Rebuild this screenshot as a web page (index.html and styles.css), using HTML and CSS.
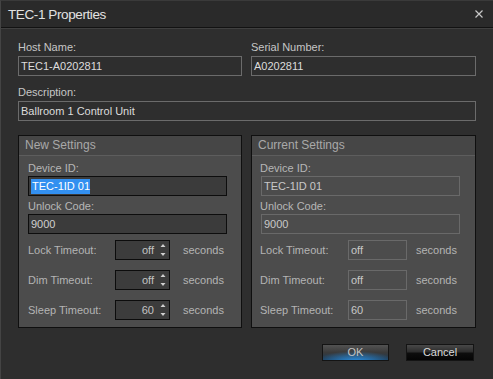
FILE: index.html
```html
<!DOCTYPE html>
<html lang="en">
<head>
<meta charset="UTF-8">
<title>TEC-1 Properties</title>
<link rel="stylesheet" href="styles.css">
</head>
<body>
<div class="dialog">
  <div class="titlebar">
    <span class="title">TEC-1 Properties</span>
    <svg class="close" width="8" height="8" viewBox="0 0 8 8"><path d="M0.5 0.5 L7.5 7.5 M7.5 0.5 L0.5 7.5" stroke="#c8c8c8" stroke-width="1.2"/></svg>
  </div>

  <div class="content">
    <div class="two-col">
      <div>
        <div class="lbl">Host Name:</div>
        <div class="field">TEC1-A0202811</div>
      </div>
      <div>
        <div class="lbl">Serial Number:</div>
        <div class="field">A0202811</div>
      </div>
    </div>

    <div class="desc">
      <div class="lbl">Description:</div>
      <div class="field">Ballroom 1 Control Unit</div>
    </div>

    <div class="two-col groups">
      <div class="group">
        <div class="group-head">New Settings</div>
        <div class="group-body">
          <div class="glbl">Device ID:</div>
          <div class="edit"><span class="sel">TEC-1ID 01</span></div>
          <div class="glbl gap">Unlock Code:</div>
          <div class="edit">9000</div>

          <div class="trow first">
            <span class="tlbl">Lock Timeout:</span>
            <div class="spin"><span>off</span><svg width="6" height="18" viewBox="0 0 6 18"><path d="M3 3 L5.5 6 L0.5 6 Z M0.5 12 L5.5 12 L3 15 Z" fill="#d0d0d0"/></svg></div>
            <span class="unit">seconds</span>
          </div>
          <div class="trow">
            <span class="tlbl">Dim Timeout:</span>
            <div class="spin"><span>off</span><svg width="6" height="18" viewBox="0 0 6 18"><path d="M3 3 L5.5 6 L0.5 6 Z M0.5 12 L5.5 12 L3 15 Z" fill="#d0d0d0"/></svg></div>
            <span class="unit">seconds</span>
          </div>
          <div class="trow">
            <span class="tlbl">Sleep Timeout:</span>
            <div class="spin"><span>60</span><svg width="6" height="18" viewBox="0 0 6 18"><path d="M3 3 L5.5 6 L0.5 6 Z M0.5 12 L5.5 12 L3 15 Z" fill="#d0d0d0"/></svg></div>
            <span class="unit">seconds</span>
          </div>
        </div>
      </div>

      <div class="group current">
        <div class="group-head">Current Settings</div>
        <div class="group-body">
          <div class="glbl">Device ID:</div>
          <div class="ro">TEC-1ID 01</div>
          <div class="glbl gap">Unlock Code:</div>
          <div class="ro">9000</div>

          <div class="trow first">
            <span class="tlbl">Lock Timeout:</span>
            <div class="ro small">off</div>
            <span class="unit">seconds</span>
          </div>
          <div class="trow">
            <span class="tlbl">Dim Timeout:</span>
            <div class="ro small">off</div>
            <span class="unit">seconds</span>
          </div>
          <div class="trow">
            <span class="tlbl">Sleep Timeout:</span>
            <div class="ro small">60</div>
            <span class="unit">seconds</span>
          </div>
        </div>
      </div>
    </div>

    <div class="buttons">
      <div class="btn ok">OK</div>
      <div class="btn cancel">Cancel</div>
    </div>
  </div>
</div>
</body>
</html>
```

FILE: styles.css
```css
* {
  box-sizing: border-box;
}
body {
  margin: 0;
  background: #2e2e2e;
  font-family: "Liberation Sans", Arial, sans-serif;
  font-size: 11px;
  color: #c8c8c8;
}
.dialog {
  width: 493px;
  height: 379px;
  border-left: 1px solid #444;
  border-top: 1px solid #3a3a3a;
  background: #2e2e2e;
}
.titlebar {
  height: 27px;
  display: flex;
  align-items: center;
  justify-content: space-between;
  padding: 0 10px 0 7px;
  background: #2a2a2a;
  border-bottom: 1px solid #121212;
  box-shadow: 0 1px 0 #404040;
}
.title {
  font-size: 13.5px;
  letter-spacing: -0.4px;
  color: #e2e2e2;
}
.close {
  display: block;
}
.content {
  padding: 13px 17px 0 17px;
}
.two-col {
  display: grid;
  grid-template-columns: 224px 225px;
  column-gap: 9px;
}
.lbl {
  height: 13px;
  line-height: 13px;
  margin-bottom: 2px;
  color: #c6c6c6;
}
.field {
  height: 20px;
  line-height: 18px;
  border: 1px solid #6b6b6b;
  padding: 0 2px;
  color: #dcdcdc;
}
.desc {
  margin-top: 10px;
}
.groups {
  margin-top: 14px;
}
.group {
  height: 193px;
  border: 1px solid #0f0f0f;
  background: #4c4c4c;
}
.group-head {
  height: 20px;
  line-height: 19px;
  padding-left: 6px;
  font-size: 12px;
  color: #a9a9a9;
  background: #464646;
  border-bottom: 1px solid #5d5d5d;
}
.group-body {
  padding: 6px 0 0 9px;
}
.current .group-body {
  padding-left: 8px;
}
.glbl {
  height: 13px;
  line-height: 13px;
  margin-bottom: 1px;
  color: #b6b6b6;
}
.glbl.gap {
  margin-top: 4px;
}
.edit {
  width: 199px;
  height: 20px;
  line-height: 18px;
  border: 1px solid #0d0d0d;
  background: #3b3b3b;
  padding: 0 2px;
  color: #cfcfcf;
}
.sel {
  background: #3390f0;
  color: #fff;
  padding: 1px 0 2px 1px;
}
.ro {
  width: 199px;
  height: 20px;
  line-height: 18px;
  border: 1px solid #696969;
  padding: 0 2px;
  color: #c8c8c8;
  margin-left: 1px;
}
.ro.small {
  width: 59px;
  margin-left: 0;
}
.trow {
  display: flex;
  align-items: center;
  height: 20px;
  margin-top: 10px;
  color: #b4b4b4;
}
.trow.first {
  margin-top: 6px;
}
.tlbl {
  width: 87px;
}
.current .tlbl {
  width: 88px;
}
.spin {
  width: 55px;
  height: 20px;
  display: flex;
  align-items: center;
  justify-content: flex-end;
  gap: 6px;
  padding-right: 3px;
  border: 1px solid #0c0c0c;
  background: #3c3c3c;
  color: #c4c4c4;
}
.unit {
  margin-left: 13px;
}
.current .unit {
  margin-left: 9px;
}
.buttons {
  display: flex;
  justify-content: flex-end;
  gap: 17px;
  margin-top: 16px;
  padding-right: 2px;
}
.btn {
  width: 67px;
  height: 17px;
  line-height: 15px;
  text-align: center;
  border: 1px solid #141414;
}
.ok {
  color: #c4c4c4;
  background:
    radial-gradient(ellipse 60% 70% at 50% 110%, rgba(45, 150, 235, 0.95), rgba(30, 110, 190, 0) 100%),
    linear-gradient(#525252, #3a3a3a 50%, #1c3a55);
}
.cancel {
  width: 68px;
  color: #dadada;
  background: linear-gradient(#484848, #2d2d2d 45%, #0d0d0d 55%, #050505);
}
```
